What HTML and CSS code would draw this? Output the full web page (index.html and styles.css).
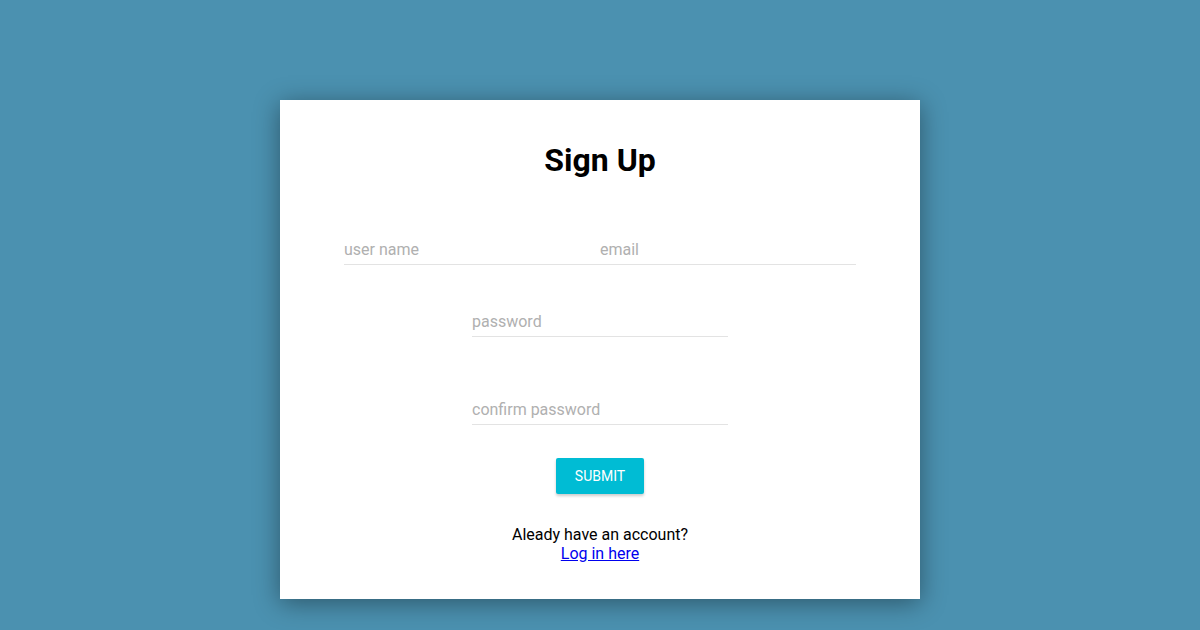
FILE: index.html
```html
<!DOCTYPE html>
<html lang="en">
<head>
<meta charset="utf-8">
<title>Sign Up</title>
<link rel="stylesheet" href="styles.css">
</head>
<body>
<div class="page">
  <form class="card">
    <h1 class="title">Sign Up</h1>
    <div class="row row-names">
      <input class="field" type="text" placeholder="user name">
      <input class="field" type="email" placeholder="email">
    </div>
    <div class="row row-pass">
      <input class="field field-center" type="password" placeholder="password">
    </div>
    <div class="row row-confirm">
      <input class="field field-center" type="password" placeholder="confirm password">
    </div>
    <div class="row row-btn">
      <button class="submit" type="button">SUBMIT</button>
    </div>
    <div class="footer">
      <div>Aleady have an account?</div>
      <a class="login" href="#">Log in here</a>
    </div>
  </form>
</div>
</body>
</html>
```

FILE: styles.css
```css
html, body {
  margin: 0;
  padding: 0;
  height: 100%;
}
body {
  background: #4b91b0;
  font-family: Roboto, "Liberation Sans", Arial, sans-serif;
  overflow: hidden;
}
.page {
  display: flex;
  justify-content: center;
  padding-top: 100px;
}
.card {
  width: 640px;
  box-sizing: border-box;
  background: #fff;
  padding: 42px 64px 36px;
  box-shadow: 0 4px 24px rgba(0, 0, 0, 0.4);
  display: flex;
  flex-direction: column;
  align-items: center;
}
.title {
  margin: 0;
  font-size: 32px;
  line-height: 36px;
  font-weight: 700;
  color: #000;
}
.row {
  display: flex;
  justify-content: center;
  width: 100%;
}
.row-names { margin-top: 56px; }
.row-pass { margin-top: 41px; }
.row-confirm { margin-top: 57px; }
.row-btn { margin-top: 33px; }
.field {
  width: 256px;
  height: 31px;
  box-sizing: border-box;
  border: none;
  border-bottom: 1px solid #e3e3e3;
  padding: 0;
  margin: 0;
  font-family: Roboto, "Liberation Sans", Arial, sans-serif;
  font-size: 16px;
  color: #333;
  outline: none;
  background: transparent;
}
.field::placeholder {
  color: #b0b0b0;
}
.submit {
  width: 88px;
  height: 36px;
  border: none;
  border-radius: 2px;
  background: #00bcd4;
  color: #fff;
  font-family: Roboto, "Liberation Sans", Arial, sans-serif;
  font-size: 14px;
  font-weight: 400;
  box-shadow: 0 2px 3px rgba(0, 0, 0, 0.2);
  cursor: pointer;
  padding: 0;
}
.footer {
  margin-top: 31px;
  text-align: center;
  font-size: 16px;
  line-height: 19px;
  color: #000;
}
.login {
  color: #0000ee;
  text-decoration: underline;
}
```
